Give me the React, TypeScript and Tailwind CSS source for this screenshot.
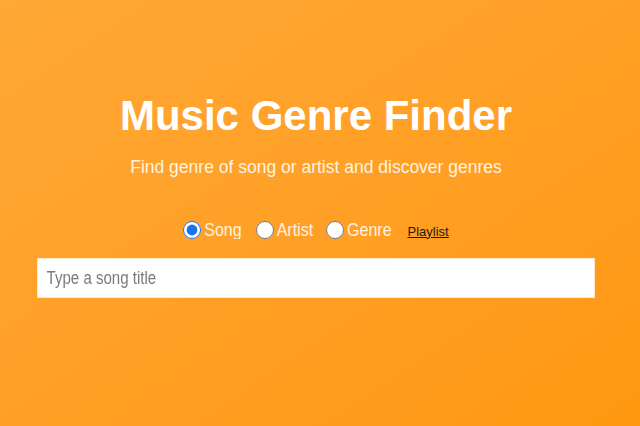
import React from "react";

export default function App() {
  return (
    <div
      className="w-[640px] h-[426px] overflow-hidden bg-gradient-to-br from-[#ffa835] to-[#ff980f]"
      style={{ fontFamily: '"Liberation Sans", Arial, sans-serif' }}
    >
      <div className="w-[632px] flex flex-col items-center">
        <h1 className="mt-[92px] text-[42px] leading-[48px] font-bold text-white">Music Genre Finder</h1>
        <p className="mt-[15px] text-[17.5px] leading-[24px] text-[#fff3e0]">
          <span className="inline-block scale-y-[1.08]">Find genre of song or artist and discover genres</span>
        </p>
        <div className="mt-[39px] h-[24px] flex items-center text-[16px] leading-[24px] text-[#fff3e0]">
          <label className="flex items-center">
            <input type="radio" name="t" defaultChecked className="w-[18px] h-[18px] m-0 mr-[3px] accent-[#1a73e8]" />
            <span className="inline-block scale-y-[1.12]">Song</span>
          </label>
          <label className="flex items-center ml-[14px]">
            <input type="radio" name="t" className="w-[18px] h-[18px] m-0 mr-[3px]" />
            <span className="inline-block scale-y-[1.12]">Artist</span>
          </label>
          <label className="flex items-center ml-[13px]">
            <input type="radio" name="t" className="w-[18px] h-[18px] m-0 mr-[3px]" />
            <span className="inline-block scale-y-[1.12]">Genre</span>
          </label>
          <a className="ml-[16px] mt-[3px] text-[13px] text-[#2a1a05] underline">Playlist</a>
        </div>
        <div className="mt-[16px] w-[558px] h-[40px] bg-white flex items-center border border-[#ffe9c8] overflow-hidden">
          <input
            autoFocus
            className="shrink-0 w-[649px] h-full px-[10px] text-[17.5px] text-[#333] placeholder:text-[#7a7a7a] outline-none bg-transparent origin-left scale-x-[0.86]"
            placeholder="Type a song title"
          />
        </div>
      </div>
    </div>
  );
}
